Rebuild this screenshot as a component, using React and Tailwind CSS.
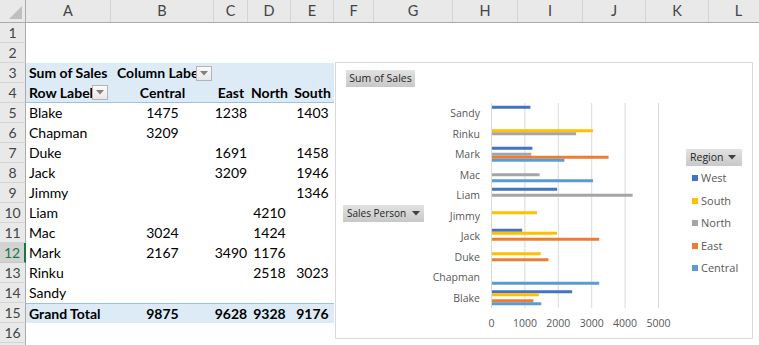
import React from 'react';

const cols = [
  { l: 'A', w: 'w-[85px]' },
  { l: 'B', w: 'w-[103px]' },
  { l: 'C', w: 'w-[34px]' },
  { l: 'D', w: 'w-[43px]' },
  { l: 'E', w: 'w-[43px]' },
  { l: 'F', w: 'w-[40px]' },
  { l: 'G', w: 'w-[79px]' },
  { l: 'H', w: 'w-[65px]' },
  { l: 'I', w: 'w-[65px]' },
  { l: 'J', w: 'w-[63px]' },
  { l: 'K', w: 'w-[63px]' },
  { l: 'L', w: 'w-[60px]' },
];

// pivot body: name, Central, East, North, South
const pivot = [
  ['Blake', 1475, 1238, '', 1403],
  ['Chapman', 3209, '', '', ''],
  ['Duke', '', 1691, '', 1458],
  ['Jack', '', 3209, '', 1946],
  ['Jimmy', '', '', '', 1346],
  ['Liam', '', '', 4210, ''],
  ['Mac', 3024, '', 1424, ''],
  ['Mark', 2167, 3490, 1176, ''],
  ['Rinku', '', '', 2518, 3023],
  ['Sandy', '', '', '', ''],
];

// chart: West, South, North, East, Central (top to bottom in each group)
const series = ['#4472c4', '#ffc000', '#a5a5a5', '#ed7d31', '#5b9bd5'];
const people = [
  ['Sandy', [1150, 0, 0, 0, 0]],
  ['Rinku', [0, 3023, 2518, 0, 0]],
  ['Mark', [1210, 0, 1176, 3490, 2167]],
  ['Mac', [0, 0, 1424, 0, 3024]],
  ['Liam', [1950, 0, 4210, 0, 0]],
  ['Jimmy', [0, 1346, 0, 0, 0]],
  ['Jack', [905, 1946, 0, 3209, 0]],
  ['Duke', [0, 1458, 0, 1691, 0]],
  ['Chapman', [0, 0, 0, 0, 3209]],
  ['Blake', [2400, 1403, 0, 1238, 1475]],
];

const legend = [
  ['West', 'bg-[#4472c4]'],
  ['South', 'bg-[#ffc000]'],
  ['North', 'bg-[#a5a5a5]'],
  ['East', 'bg-[#ed7d31]'],
  ['Central', 'bg-[#5b9bd5]'],
];

const Arrow = ({ color = '#404040' }) => (
  <svg width="8" height="5" viewBox="0 0 8 5">
    <polygon points="0,0 8,0 4,4.5" fill={color} />
  </svg>
);

const CellDrop = () => (
  <div className="w-[16px] h-[15px] shrink-0 border border-[#b4b4b4] bg-linear-to-b from-[#fbfbfb] to-[#e8e8e8] flex items-center justify-center">
    <Arrow color="#808080" />
  </div>
);

const RowHead = ({ n }) => (
  <div
    className={
      n === 12
        ? 'w-[26px] shrink-0 h-full bg-[#d2d2d2] border-b border-[#c6c6c6] border-r-2 border-r-[#217346] text-[#217346] text-center leading-[19px]'
        : 'w-[26px] shrink-0 h-full bg-[#e9e9e9] border-b border-[#d4d4d4] border-r border-r-[#ababab] text-[#444] text-center leading-[19px]'
    }
  >
    {n < 17 ? n : ''}
  </div>
);

const Row = ({ n, className = '', children }) => (
  <div className="flex h-[20px]">
    <RowHead n={n} />
    <div className={`flex w-[308px] h-full leading-[20px] text-[#000] ${className}`}>{children}</div>
  </div>
);

const Chart = () => {
  const x0 = 155.5;
  const k = 0.0334;
  const top = 40;
  const pitch = 20.5;
  return (
    <div className="absolute left-[335px] top-[62px] w-[418px] h-[277px] border border-[#d9d9d9] bg-white font-['Open_Sans',sans-serif] text-[#404040]">
      <svg className="absolute left-0 top-0" width="416" height="275">
        {[0, 1, 2, 3, 4, 5].map((i) => (
          <line key={i} x1={x0 + i * 33.4} x2={x0 + i * 33.4} y1={top} y2={top + 205} stroke="#d9d9d9" strokeWidth="1" />
        ))}
        {people.map(([name, vals], i) => {
          const c = top + (i + 0.5) * pitch;
          return (
            <g key={name}>
              <text x="144" y={c + 4} textAnchor="end" fontSize="10.5" fill="#595959">
                {name}
              </text>
              {vals.map((v, j) =>
                v ? <rect key={j} x={x0 + 0.5} y={c - 7.5 + j * 3} width={v * k} height="3" fill={series[j]} /> : null
              )}
            </g>
          );
        })}
        {[0, 1000, 2000, 3000, 4000, 5000].map((v, i) => (
          <text key={v} x={x0 + i * 33.4} y="264" textAnchor="middle" fontSize="10.5" fill="#595959">
            {v}
          </text>
        ))}
      </svg>

      <div className="absolute left-[10px] top-[7px] w-[69px] h-[17px] bg-linear-to-b from-[#e2e2e2] to-[#c8c8c8] text-[10.5px] leading-[17px] text-[#262626] text-center">
        Sum of Sales
      </div>
      <div className="absolute left-[7px] top-[142px] w-[81px] h-[17px] bg-linear-to-b from-[#e2e2e2] to-[#c8c8c8] text-[10px] leading-[17px] text-[#262626] flex items-center gap-[6px] pl-[4px]">
        <span>Sales Person</span>
        <Arrow />
      </div>
      <div className="absolute left-[350px] top-[86px] w-[56px] h-[17px] bg-linear-to-b from-[#e2e2e2] to-[#c8c8c8] text-[10.5px] leading-[17px] text-[#262626] flex items-center justify-between pl-[4px] pr-[6px]">
        <span>Region</span>
        <Arrow />
      </div>

      <div className="absolute left-[356px] top-[104px] flex flex-col">
        {legend.map(([name, bg]) => (
          <div key={name} className="h-[22.5px] flex items-center gap-[3px] text-[11px] text-[#595959]">
            <span className={`w-[6px] h-[6px] ${bg}`} />
            <span>{name}</span>
          </div>
        ))}
      </div>
    </div>
  );
};

export default function App() {
  return (
    <div className="relative w-[759px] h-[345px] overflow-hidden bg-white font-['Lato',sans-serif] text-[14px]">
      {/* column headers */}
      <div className="flex h-[23px] bg-[#e9e9e9] border-b border-[#ababab] text-[#444] text-[14.5px]">
        <div className="w-[26px] shrink-0 border-r border-[#ababab] relative">
          <div className="absolute right-[3px] bottom-[3px] w-0 h-0 border-l-[13px] border-l-transparent border-b-[13px] border-b-[#bfbfbf]" />
        </div>
        {cols.map((c) => (
          <div key={c.l} className={`${c.w} shrink-0 border-r border-[#d4d4d4] text-center leading-[22px]`}>
            {c.l}
          </div>
        ))}
      </div>

      <Row n={1} />
      <Row n={2} />
      <Row n={3} className="bg-[#ddebf7] font-bold">
        <div className="w-[85px] pl-[3px] whitespace-nowrap">Sum of Sales</div>
        <div className="w-[103px] flex items-center pl-[6px] pr-[2px]">
          <span className="flex-1 overflow-hidden whitespace-nowrap">Column Labels</span>
          <CellDrop />
        </div>
      </Row>
      <Row n={4} className="bg-[#ddebf7] font-bold border-b border-[#9bc2e6]">
        <div className="w-[85px] flex items-center pl-[3px] pr-[3px]">
          <span className="flex-1 overflow-hidden whitespace-nowrap">Row Labels</span>
          <CellDrop />
        </div>
        <div className="w-[103px] text-center">Central</div>
        <div className="w-[34px] text-center">East</div>
        <div className="w-[43px] text-center">North</div>
        <div className="w-[43px] text-center">South</div>
      </Row>
      {pivot.map((r, i) => (
        <Row key={r[0]} n={i + 5}>
          <div className="w-[85px] pl-[3px]">{r[0]}</div>
          <div className="w-[103px] text-center">{r[1]}</div>
          <div className="w-[34px] text-center">{r[2]}</div>
          <div className="w-[43px] text-center">{r[3]}</div>
          <div className="w-[43px] text-center">{r[4]}</div>
        </Row>
      ))}
      <Row n={15} className="bg-[#ddebf7] font-bold border-t border-[#9bc2e6]">
        <div className="w-[85px] pl-[3px] whitespace-nowrap">Grand Total</div>
        <div className="w-[103px] text-center">9875</div>
        <div className="w-[34px] text-center">9628</div>
        <div className="w-[43px] text-center">9328</div>
        <div className="w-[43px] text-center">9176</div>
      </Row>
      <Row n={16} />
      <Row n={17} />

      <Chart />
    </div>
  );
}
